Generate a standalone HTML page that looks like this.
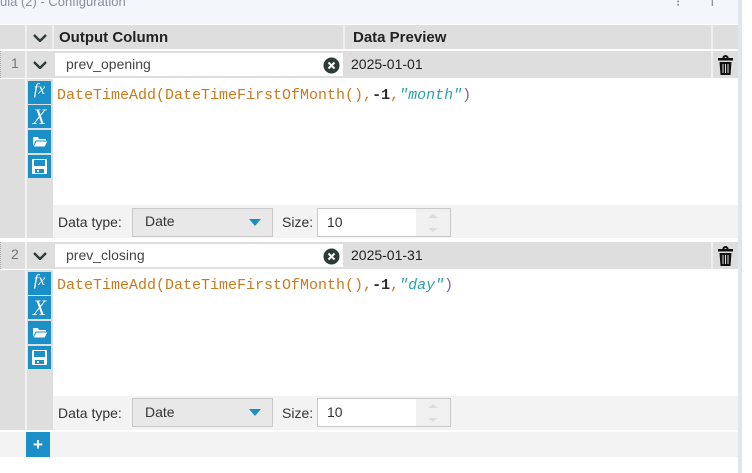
<!DOCTYPE html>
<html><head><style>
*{margin:0;padding:0;box-sizing:border-box}
body{width:752px;height:473px;background:#fff;position:relative;overflow:hidden;font-family:"Liberation Sans",sans-serif;font-size:14px;color:#222}
.a{position:absolute}
.g{background:#dedede}
.mono{font-family:"Liberation Mono",monospace;font-size:15px;color:#c87a1e;white-space:pre}
.ic{position:absolute;left:28px;width:23px;height:23px;background:#1b8fc7;color:#fff;text-align:center}
.chev{position:absolute;width:14px;height:8px}
</style></head><body>
<div class="a" style="left:0;top:0;width:738px;height:24px;background:#f3f6fb"></div>
<div class="a" style="left:0;top:-6px;font-size:13px;color:#8a8f99">ula (2) - Configuration</div>
<div class="a" style="left:676px;top:-6px;color:#666;font-size:13px">⁝</div>
<div class="a" style="left:708px;top:-7px;color:#555;font-size:14px">⍑</div>
<div class="a" style="left:738px;top:0;width:4px;height:473px;background:#dfe6f1"></div>

<div class="a g" style="left:0;top:25px;width:738px;height:24px"></div>
<div class="a" style="left:25px;top:25px;width:2px;height:24px;background:#eee"></div>
<div class="a" style="left:52px;top:25px;width:2px;height:24px;background:#eee"></div>
<div class="a" style="left:343px;top:25px;width:2px;height:24px;background:#eee"></div>
<div class="a" style="left:711px;top:25px;width:2px;height:24px;background:#eee"></div>
<svg class="chev" style="left:33px;top:34px" viewBox="0 0 14 8"><path d="M1 1L7 7L13 1" stroke="#2f3b3b" stroke-width="2.4" fill="none"/></svg>
<div class="a" style="left:59px;top:29px;font-weight:bold;font-size:15px">Output Column</div>
<div class="a" style="left:353px;top:29px;font-weight:bold;font-size:15px">Data Preview</div>

<!-- ROW 1 -->
<div class="a g" style="left:0;top:51px;width:738px;height:27px"></div>
<div class="a" style="left:0;top:51px;width:2px;height:27px;border-left:1px dotted #aaa"></div>
<div class="a" style="left:11px;top:55px;color:#777">1</div>
<div class="a" style="left:25px;top:51px;width:2px;height:187px;background:#f2f2f2"></div>
<svg class="chev" style="left:33px;top:61px" viewBox="0 0 14 8"><path d="M1 1L7 7L13 1" stroke="#2f3b3b" stroke-width="2.4" fill="none"/></svg>
<div class="a" style="left:55px;top:53px;width:288px;height:23px;background:#fff"></div>
<div class="a" style="left:66px;top:56px;color:#444">prev_opening</div>
<svg class="a" style="left:323px;top:57px" width="17" height="17" viewBox="0 0 17 17"><circle cx="8.5" cy="8.5" r="8" fill="#2c3b36"/><path d="M5.5 5.5L11.5 11.5M11.5 5.5L5.5 11.5" stroke="#fff" stroke-width="2"/></svg>
<div class="a" style="left:351px;top:56px">2025-01-01</div>
<div class="a" style="left:711px;top:51px;width:2px;height:27px;background:#eee"></div>
<svg class="a" style="left:717px;top:54px" width="17" height="22" viewBox="0 0 17 22"><rect x="1" y="4" width="15" height="2.5" fill="#111"/><path d="M6 4Q8.5 0 11 4" stroke="#111" stroke-width="2" fill="none"/><path d="M2.5 8H14.5L13.5 21H3.5Z" fill="#111"/><path d="M6 10V19M8.5 10V19M11 10V19" stroke="#ddd" stroke-width="1"/></svg>
<div class="a" style="left:0;top:79px;width:25px;height:159px;background:#dedede"></div>
<div class="a" style="left:27px;top:79px;width:26px;height:159px;background:#dedede"></div>
<div class="a" style="left:53px;top:79px;width:685px;height:126px;background:#fff"></div>
<div class="a mono" style="left:57px;top:87px">DateTimeAdd(DateTimeFirstOfMonth(),<b style="color:#2a2a2a">-1</b>,<i style="color:#2a9fb0">"month"</i><span style="color:#8060a0">)</span></div>
<div class="ic" style="top:81px;font-family:'Liberation Serif',serif;font-style:italic;font-size:16px">fx</div>
<div class="ic" style="top:105px;font-family:'Liberation Serif',serif;font-style:italic;font-size:22px;line-height:23px">X</div>
<div class="ic" style="top:130px"><svg width="23" height="23"><path d="M5 7H10L11 9H18V16H5Z" fill="#fff"/><path d="M5 17L8 11H20L17 17Z" fill="#fff" stroke="#1b8fc7"/></svg></div>
<div class="ic" style="top:155px"><svg width="23" height="23"><rect x="4" y="4" width="15" height="15" rx="1" fill="#fff"/><rect x="6" y="5" width="11" height="6" fill="#1b8fc7"/><rect x="7" y="14" width="9" height="4" fill="#1b8fc7"/><rect x="9" y="15" width="2" height="2" fill="#fff"/></svg></div>
<div class="a" style="left:53px;top:205px;width:685px;height:33px;background:#f3f3f3"></div>
<div class="a" style="left:58px;top:214px;font-size:14px;color:#333">Data type:</div>
<div class="a" style="left:132px;top:208px;width:141px;height:29px;background:#e8e8e8;border:1px solid #c9c9c9"></div>
<div class="a" style="left:145px;top:213px;color:#333">Date</div>
<svg class="a" style="left:249px;top:219px" width="12" height="7"><path d="M0 0H12L6 7Z" fill="#1b8fc7"/></svg>
<div class="a" style="left:282px;top:214px;color:#333">Size:</div>
<div class="a" style="left:317px;top:208px;width:134px;height:29px;background:#fff;border:1px solid #c9c9c9"></div>
<div class="a" style="left:327px;top:214px;color:#333">10</div>
<div class="a" style="left:416px;top:209px;width:34px;height:27px;background:#f0f0f0"></div>
<svg class="a" style="left:426px;top:211px" width="14" height="24"><path d="M2 7L7 3L12 7Z" fill="#ddd"/><path d="M2 17L7 21L12 17Z" fill="#ddd"/></svg>

<!-- ROW 2 -->
<div class="a g" style="left:0;top:242px;width:738px;height:27px"></div>
<div class="a" style="left:0;top:242px;width:2px;height:27px;border-left:1px dotted #aaa"></div>
<div class="a" style="left:11px;top:246px;color:#777">2</div>
<div class="a" style="left:25px;top:242px;width:2px;height:188px;background:#f2f2f2"></div>
<svg class="chev" style="left:33px;top:252px" viewBox="0 0 14 8"><path d="M1 1L7 7L13 1" stroke="#2f3b3b" stroke-width="2.4" fill="none"/></svg>
<div class="a" style="left:55px;top:244px;width:288px;height:23px;background:#fff"></div>
<div class="a" style="left:66px;top:247px;color:#444">prev_closing</div>
<svg class="a" style="left:323px;top:248px" width="17" height="17" viewBox="0 0 17 17"><circle cx="8.5" cy="8.5" r="8" fill="#2c3b36"/><path d="M5.5 5.5L11.5 11.5M11.5 5.5L5.5 11.5" stroke="#fff" stroke-width="2"/></svg>
<div class="a" style="left:351px;top:247px">2025-01-31</div>
<div class="a" style="left:711px;top:242px;width:2px;height:27px;background:#eee"></div>
<svg class="a" style="left:717px;top:245px" width="17" height="22" viewBox="0 0 17 22"><rect x="1" y="4" width="15" height="2.5" fill="#111"/><path d="M6 4Q8.5 0 11 4" stroke="#111" stroke-width="2" fill="none"/><path d="M2.5 8H14.5L13.5 21H3.5Z" fill="#111"/><path d="M6 10V19M8.5 10V19M11 10V19" stroke="#ddd" stroke-width="1"/></svg>
<div class="a" style="left:0;top:270px;width:25px;height:160px;background:#dedede"></div>
<div class="a" style="left:27px;top:270px;width:26px;height:160px;background:#dedede"></div>
<div class="a" style="left:53px;top:270px;width:685px;height:126px;background:#fff"></div>
<div class="a mono" style="left:57px;top:277px">DateTimeAdd(DateTimeFirstOfMonth(),<b style="color:#2a2a2a">-1</b>,<i style="color:#2a9fb0">"day"</i><span style="color:#8060a0">)</span></div>
<div class="ic" style="top:272px;font-family:'Liberation Serif',serif;font-style:italic;font-size:16px">fx</div>
<div class="ic" style="top:296px;font-family:'Liberation Serif',serif;font-style:italic;font-size:22px;line-height:23px">X</div>
<div class="ic" style="top:321px"><svg width="23" height="23"><path d="M5 7H10L11 9H18V16H5Z" fill="#fff"/><path d="M5 17L8 11H20L17 17Z" fill="#fff" stroke="#1b8fc7"/></svg></div>
<div class="ic" style="top:346px"><svg width="23" height="23"><rect x="4" y="4" width="15" height="15" rx="1" fill="#fff"/><rect x="6" y="5" width="11" height="6" fill="#1b8fc7"/><rect x="7" y="14" width="9" height="4" fill="#1b8fc7"/><rect x="9" y="15" width="2" height="2" fill="#fff"/></svg></div>
<div class="a" style="left:53px;top:396px;width:685px;height:34px;background:#f3f3f3"></div>
<div class="a" style="left:58px;top:405px;color:#333">Data type:</div>
<div class="a" style="left:132px;top:398px;width:141px;height:29px;background:#e8e8e8;border:1px solid #c9c9c9"></div>
<div class="a" style="left:145px;top:404px;color:#333">Date</div>
<svg class="a" style="left:249px;top:409px" width="12" height="7"><path d="M0 0H12L6 7Z" fill="#1b8fc7"/></svg>
<div class="a" style="left:282px;top:405px;color:#333">Size:</div>
<div class="a" style="left:317px;top:398px;width:134px;height:29px;background:#fff;border:1px solid #c9c9c9"></div>
<div class="a" style="left:327px;top:404px;color:#333">10</div>
<div class="a" style="left:416px;top:399px;width:34px;height:27px;background:#f0f0f0"></div>
<svg class="a" style="left:426px;top:401px" width="14" height="24"><path d="M2 7L7 3L12 7Z" fill="#ddd"/><path d="M2 17L7 21L12 17Z" fill="#ddd"/></svg>

<div class="a" style="left:0;top:432px;width:738px;height:25px;background:#f3f3f3"></div>
<div class="a" style="left:26px;top:432px;width:24px;height:25px;background:#1b8fc7;color:#fff;font-weight:bold;text-align:center;font-size:17px;line-height:25px">+</div>
</body></html>
